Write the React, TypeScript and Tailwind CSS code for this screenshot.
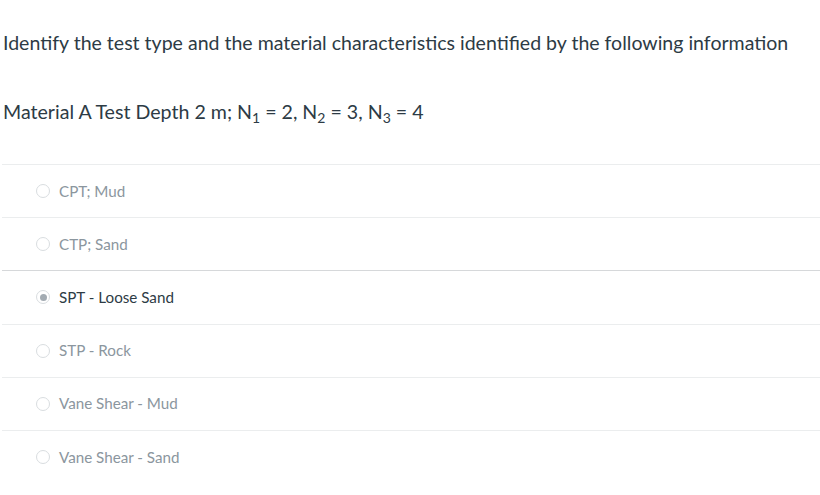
const options = [
  { label: 'CPT; Mud', selected: false },
  { label: 'CTP; Sand', selected: false },
  { label: 'SPT - Loose Sand', selected: true },
  { label: 'STP - Rock', selected: false },
  { label: 'Vane Shear - Mud', selected: false },
  { label: 'Vane Shear - Sand', selected: false },
]

const Radio = ({ selected }: { selected: boolean }) => (
  <span className="flex size-[14px] shrink-0 items-center justify-center rounded-full border-[1.5px] border-[#d9dde0] bg-white">
    {selected && <span className="size-[7px] rounded-full bg-[#a3abb2]" />}
  </span>
)

export default function App() {
  return (
    <div className="min-h-[495px] bg-white font-['Lato','Noto_Sans',sans-serif] text-[#2d3b45]">
      <div className="pl-[3px] pt-[29px] text-[19.55px] leading-[28px]">
        Identify the test type and the material characteristics identified by the following information
      </div>
      <div className="pl-[3px] pt-[41px] text-[19.6px] leading-[28px]">
        Material A Test Depth 2 m; N<sub className="text-[14px]">1</sub> = 2, N
        <sub className="text-[14px]">2</sub> = 3, N<sub className="text-[14px]">3</sub> = 4
      </div>
      <div className="ml-[2px] mt-[38px]">
        {options.map((o) => (
          <div
            key={o.label}
            className={
              'flex h-[53.2px] items-center gap-[9px] border-t pl-[34px] text-[15.2px] ' +
              (o.selected ? 'border-[#d6d8da] text-[#2d3b45]' : 'border-[#ebedee] text-[#8b969e]')
            }
          >
            <Radio selected={o.selected} />
            <span>{o.label}</span>
          </div>
        ))}
      </div>
    </div>
  )
}
